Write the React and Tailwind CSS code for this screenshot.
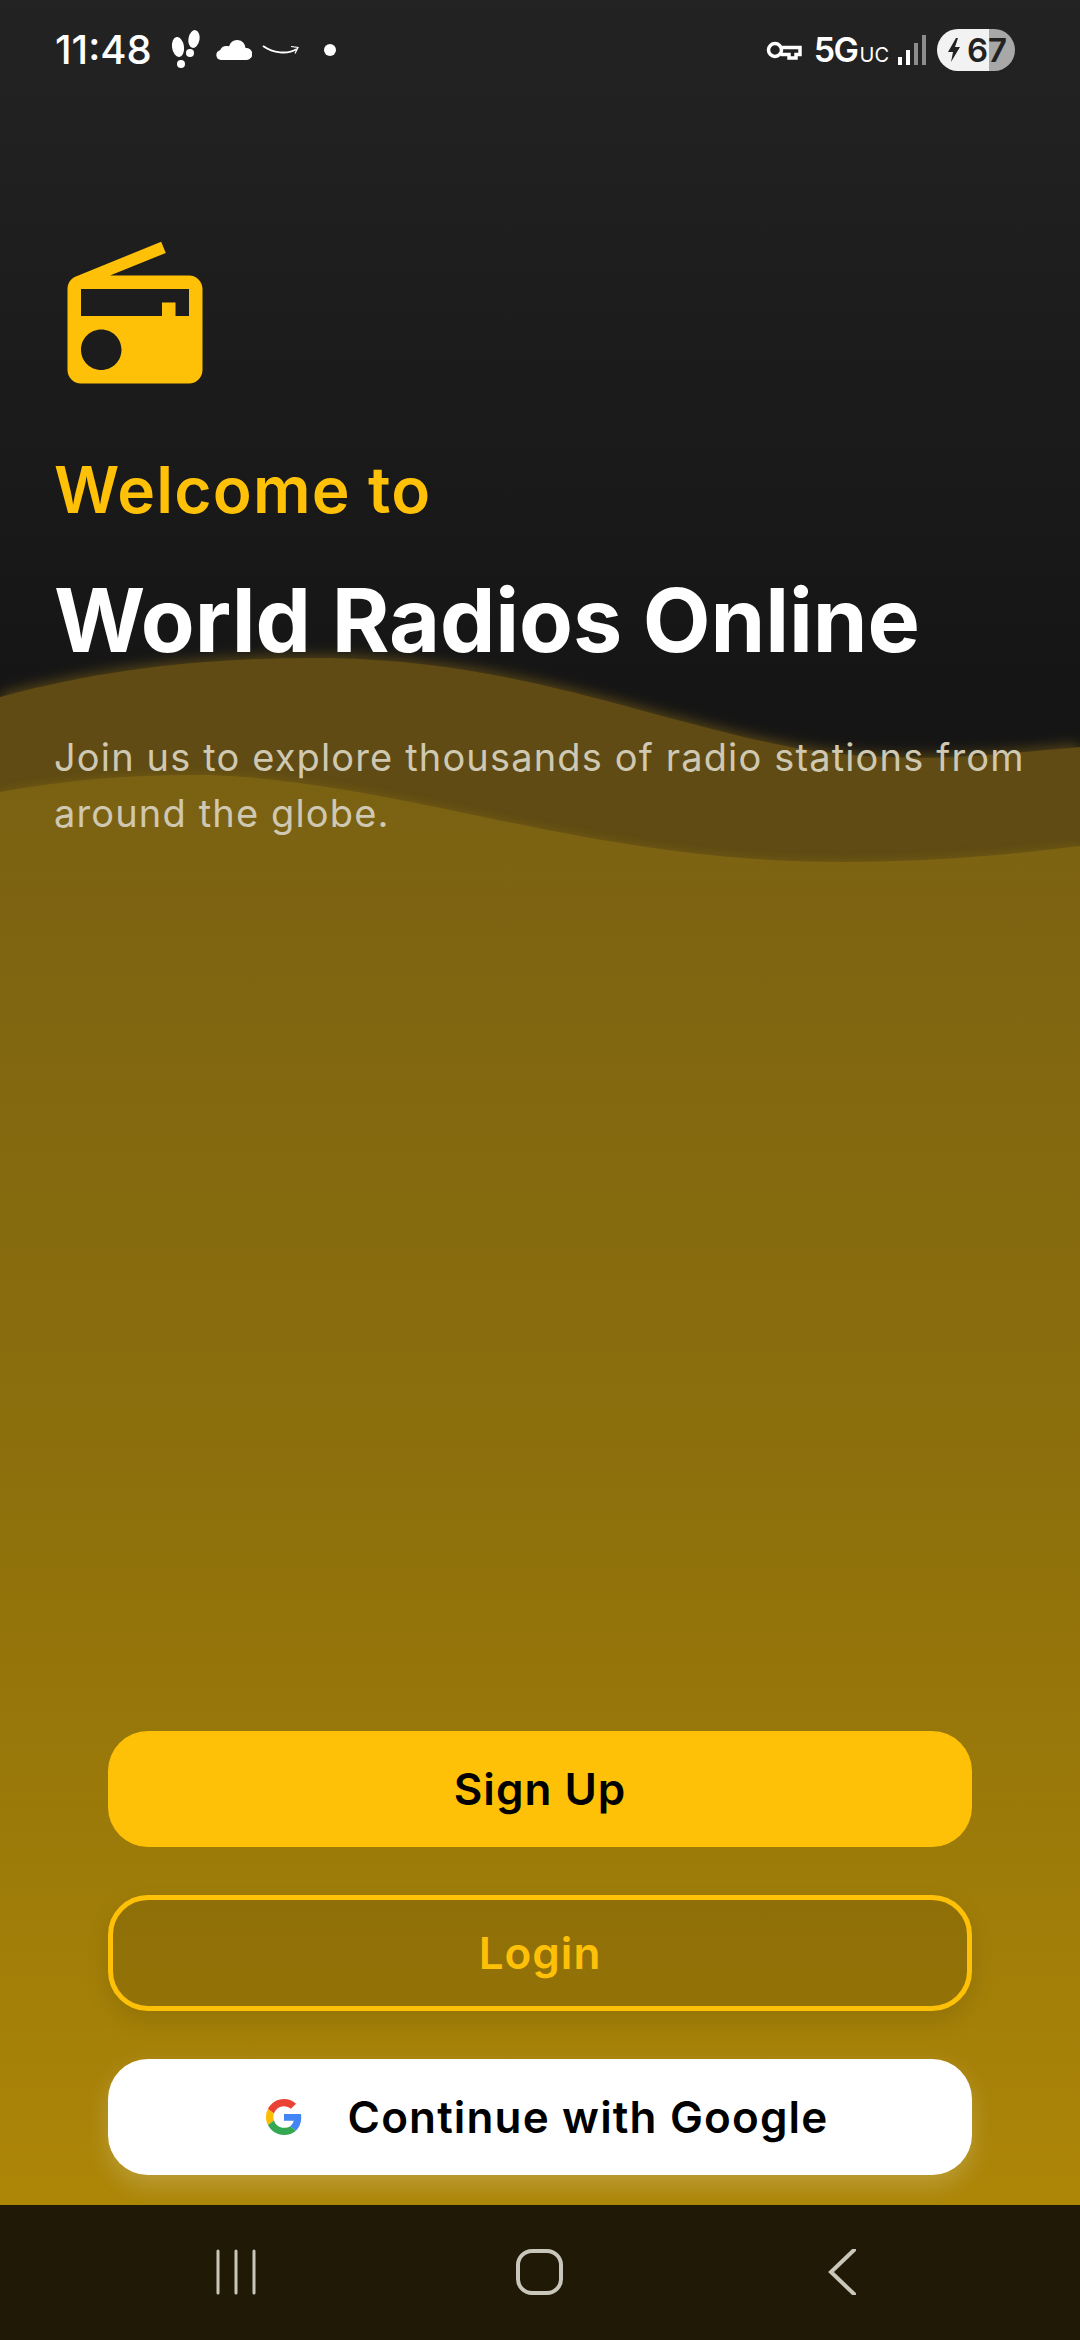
import React from "react";

const font = { fontFamily: "Inter, 'Noto Sans', sans-serif" };

const Waves = () => (
  <svg className="absolute left-0 top-0" width="1080" height="2205" viewBox="0 0 1080 2205">
    <defs>
      <linearGradient id="gold" x1="0" y1="760" x2="0" y2="2205" gradientUnits="userSpaceOnUse">
        <stop offset="0" stopColor="#7a6113" />
        <stop offset="0.5" stopColor="#8d700c" />
        <stop offset="1" stopColor="#ad8607" />
      </linearGradient>
    </defs>
    <path className="blur-[7px]" opacity="0.7" d="M0 695C110 665 220 655 330 656C520 660 640 715 790 745C900 765 1000 752 1080 745V900H0Z" fill="#7b6016" />
    <path d="M0 697C110 667 220 657 330 658C520 662 640 717 790 747C900 767 1000 754 1080 747V900H0Z" fill="#5f4b13" />
    <path className="blur-[5px]" opacity="0.7" d="M0 791C70 778 140 773 210 774C400 782 560 850 790 860C900 864 1000 855 1080 845V2205H0Z" fill="#7a6113" />
    <path d="M0 792C70 779 140 774 210 775C400 783 560 851 790 861C900 865 1000 856 1080 846V2205H0Z" fill="url(#gold)" />
  </svg>
);

const StatusBar = () => (
  <div className="relative flex h-[100px] items-center justify-between pl-[55px] pr-[65px] text-white">
    <div className="flex items-center">
      <span className="w-[100px] text-[40px] font-medium leading-none">11:48</span>
      <svg width="32" height="40" viewBox="0 0 32 40" fill="white" className="ml-[15px]">
        <ellipse cx="8" cy="17" rx="6" ry="10" transform="rotate(-8 8 17)" />
        <ellipse cx="11" cy="34" rx="4" ry="4" />
        <ellipse cx="24" cy="9" rx="5.500" ry="9" transform="rotate(10 24 9)" />
        <ellipse cx="20" cy="23" rx="4" ry="4" />
      </svg>
      <svg width="36" height="20" viewBox="0 0 36 20" fill="white" className="ml-[14px]">
        <path d="M5 20a5 5 0 0 1-1-9.800A7 7 0 0 1 11 6c1 0 1.500.2 2 .4A9 9 0 0 1 21 0c4.600 0 8 3 8.500 8A6 6 0 0 1 31 20Z" />
      </svg>
      <svg width="38" height="12" viewBox="0 0 38 12" fill="none" stroke="white" className="ml-[10px]">
        <path d="M1 2c10 7 24 9 34 3" strokeWidth="2" />
        <path d="M29 2.500l7 1-3 6" strokeWidth="1.200" />
      </svg>
      <div className="ml-[24px] h-[12px] w-[12px] rounded-full bg-white" />
    </div>
    <div className="flex items-center">
      <svg width="36" height="20" viewBox="0 0 36 20" fill="none" stroke="white" strokeWidth="3.500">
        <circle cx="9" cy="10" r="6.500" />
        <path d="M15 7.500h19v7h-4v3.500h-7v-3.500h-8" />
      </svg>
      <div className="ml-[12px] flex items-baseline">
        <span className="text-[34px] font-semibold leading-none tracking-[-1.500px]">5G</span>
        <span className="ml-[2px] text-[20px] leading-none">UC</span>
      </div>
      <svg width="28" height="30" viewBox="0 0 28 30" className="ml-[9px]">
        <rect x="0" y="22" width="4" height="8" fill="white" />
        <rect x="8" y="15" width="4" height="15" fill="white" />
        <rect x="16" y="8" width="4" height="22" fill="#8c8c8c" />
        <rect x="24" y="0" width="4" height="30" fill="#8c8c8c" />
      </svg>
      <div className="ml-[11px] flex h-[42px] w-[78px] items-center overflow-hidden rounded-full bg-[linear-gradient(90deg,#f2f2f2_0,#f2f2f2_52px,#a8a8a8_52px)] pl-[10px] text-[#222222]">
        <svg width="14" height="24" viewBox="0 0 14 24" fill="#222222">
          <path d="M9 0 1 14h5l-2 10 9-15H8l3-9Z" />
        </svg>
        <span className="ml-[6px] text-[33px] font-semibold leading-none">67</span>
      </div>
    </div>
  </div>
);

const GoogleIcon = () => (
  <svg width="36" height="36" viewBox="0 0 48 48">
    <path fill="#EA4335" d="M24 9.500c3.540 0 6.710 1.220 9.210 3.600l6.850-6.850C35.900 2.380 30.470 0 24 0 14.620 0 6.510 5.380 2.560 13.220l7.980 6.190C12.430 13.720 17.740 9.500 24 9.500z" />
    <path fill="#4285F4" d="M46.980 24.550c0-1.570-.15-3.090-.38-4.550H24v9.020h12.940c-.58 2.960-2.260 5.480-4.780 7.180l7.730 6c4.510-4.180 7.090-10.360 7.090-17.650z" />
    <path fill="#FBBC05" d="M10.530 28.590c-.48-1.450-.76-2.990-.76-4.590s.27-3.140.76-4.590l-7.980-6.190C.92 16.460 0 20.120 0 24c0 3.880.92 7.540 2.560 10.780l7.970-6.190z" />
    <path fill="#34A853" d="M24 48c6.480 0 11.930-2.130 15.890-5.810l-7.730-6c-2.150 1.450-4.920 2.300-8.160 2.300-6.260 0-11.570-4.220-13.470-9.910l-7.980 6.190C6.510 42.620 14.620 48 24 48z" />
  </svg>
);

const NavBar = () => (
  <div className="relative flex h-[135px] items-start bg-[#201905] pt-[44px]">
    <svg width="1080" height="46" viewBox="0 0 1080 46" fill="none" stroke="#c9c6bc" strokeLinecap="round">
      <path d="M218 2v42M236 2v42M254 2v42" strokeWidth="3" />
      <rect x="518" y="2" width="43" height="42" rx="14" strokeWidth="4" />
      <path d="M854 1 831 23l23 22" strokeWidth="4" />
    </svg>
  </div>
);

export default function App() {
  return (
    <div style={font} className="relative flex h-[2340px] w-[1080px] flex-col overflow-hidden bg-[linear-gradient(180deg,#232323_0,#151515_700px)]">
      <Waves />
      <StatusBar />
      <div className="relative flex flex-1 flex-col pl-[54px] pr-[50px]">
        <svg width="162" height="162" viewBox="0 0 24 24" fill="#FFC107" className="mt-[135px]">
          <path d="M3.240 6.150C2.510 6.430 2 7.170 2 8v12c0 1.100.890 2 2 2h16c1.110 0 2-.900 2-2V8c0-1.110-.890-2-2-2H8.300l8.260-3.340L15.880 1 3.240 6.150zM7 20c-1.660 0-3-1.340-3-3s1.340-3 3-3 3 1.340 3 3-1.340 3-3 3zm13-8h-2v-2h-2v2H4V8h16v4z" />
        </svg>
        <h2 className="mt-[51px] text-[64px] font-semibold leading-[84px] tracking-[1.200px] text-[#FFC107]">Welcome to</h2>
        <h1 className="mt-[38px] text-[88px] font-bold leading-[100px] tracking-[-0.100px] text-white">World Radios Online</h1>
        <p className="mt-[59px] text-[38px] leading-[56px] tracking-[1.150px] text-[#cfc8b2]">
          Join us to explore thousands of radio stations from around the globe.
        </p>
        <div className="mt-auto mb-[30px] flex flex-col gap-[48px] pl-[54px] pr-[58px]">
          <button className="h-[116px] rounded-[40px] bg-[#FFC107] text-[44px] font-semibold tracking-[1px] text-black">Sign Up</button>
          <button className="h-[116px] rounded-[40px] border-[5px] border-[#FFC107] bg-black/10 text-[44px] font-semibold tracking-[1px] text-[#FFC107] shadow-[0_10px_24px_rgba(0,0,0,0.1)]">Login</button>
          <button className="flex h-[116px] items-center justify-center gap-[46px] rounded-[40px] bg-white pl-[14px] text-[44px] font-semibold tracking-[1.150px] text-black shadow-[0_10px_24px_rgba(255,255,255,0.2)]">
            <GoogleIcon />
            Continue with Google
          </button>
        </div>
      </div>
      <NavBar />
    </div>
  );
}
